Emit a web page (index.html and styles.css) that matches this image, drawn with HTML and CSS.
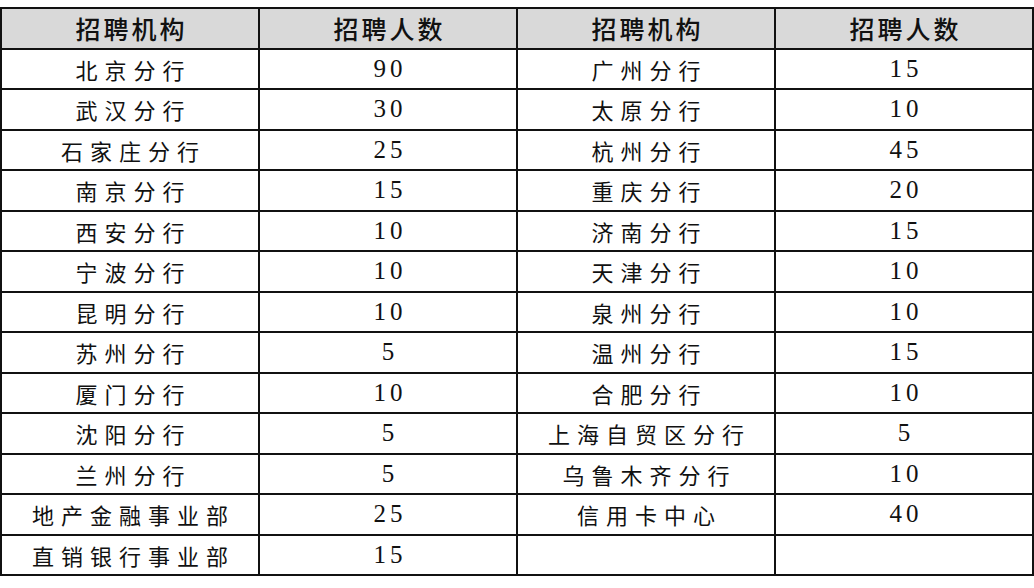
FILE: index.html
```html
<!DOCTYPE html>
<html lang="zh">
<head>
<meta charset="utf-8">
<link rel="stylesheet" href="styles.css">
</head>
<body>
<table class="grid">
<thead>
<tr><th>招聘机构</th><th>招聘人数</th><th>招聘机构</th><th>招聘人数</th></tr>
</thead>
<tbody>
<tr><td class="org">北京分行</td><td class="num">90</td><td class="org">广州分行</td><td class="num">15</td></tr>
<tr><td class="org">武汉分行</td><td class="num">30</td><td class="org">太原分行</td><td class="num">10</td></tr>
<tr><td class="org">石家庄分行</td><td class="num">25</td><td class="org">杭州分行</td><td class="num">45</td></tr>
<tr><td class="org">南京分行</td><td class="num">15</td><td class="org">重庆分行</td><td class="num">20</td></tr>
<tr><td class="org">西安分行</td><td class="num">10</td><td class="org">济南分行</td><td class="num">15</td></tr>
<tr><td class="org">宁波分行</td><td class="num">10</td><td class="org">天津分行</td><td class="num">10</td></tr>
<tr><td class="org">昆明分行</td><td class="num">10</td><td class="org">泉州分行</td><td class="num">10</td></tr>
<tr><td class="org">苏州分行</td><td class="num">5</td><td class="org">温州分行</td><td class="num">15</td></tr>
<tr><td class="org">厦门分行</td><td class="num">10</td><td class="org">合肥分行</td><td class="num">10</td></tr>
<tr><td class="org">沈阳分行</td><td class="num">5</td><td class="org">上海自贸区分行</td><td class="num">5</td></tr>
<tr><td class="org">兰州分行</td><td class="num">5</td><td class="org">乌鲁木齐分行</td><td class="num">10</td></tr>
<tr><td class="org">地产金融事业部</td><td class="num">25</td><td class="org">信用卡中心</td><td class="num">40</td></tr>
<tr><td class="org">直销银行事业部</td><td class="num">15</td><td class="org"></td><td class="num"></td></tr>
</tbody>
</table>
</body>
</html>
```
FILE: styles.css
```css
html, body {
  margin: 0;
  padding: 0;
  background: #ffffff;
}
body {
  padding-top: 7px;
}
.grid {
  width: 1034px;
  border-collapse: collapse;
  table-layout: fixed;
  color: #111;
}
.grid th,
.grid td {
  border: 2px solid #111;
  height: 38.5px;
  padding: 0;
  line-height: 30px;
  text-align: center;
  vertical-align: middle;
  white-space: nowrap;
}
.grid th {
  background: #d9d9d9;
  font-family: "Noto Sans CJK SC", sans-serif;
  font-size: 25px;
  font-weight: 500;
  letter-spacing: 3px;
  padding-left: 3px;
}
.grid td.org {
  font-family: "Noto Sans CJK SC", sans-serif;
  font-size: 22px;
  font-weight: 400;
  letter-spacing: 7px;
  padding-left: 7px;
}
.grid td.num {
  font-family: "Liberation Serif", serif;
  font-size: 25px;
  letter-spacing: 4px;
  padding-left: 4px;
}
```
